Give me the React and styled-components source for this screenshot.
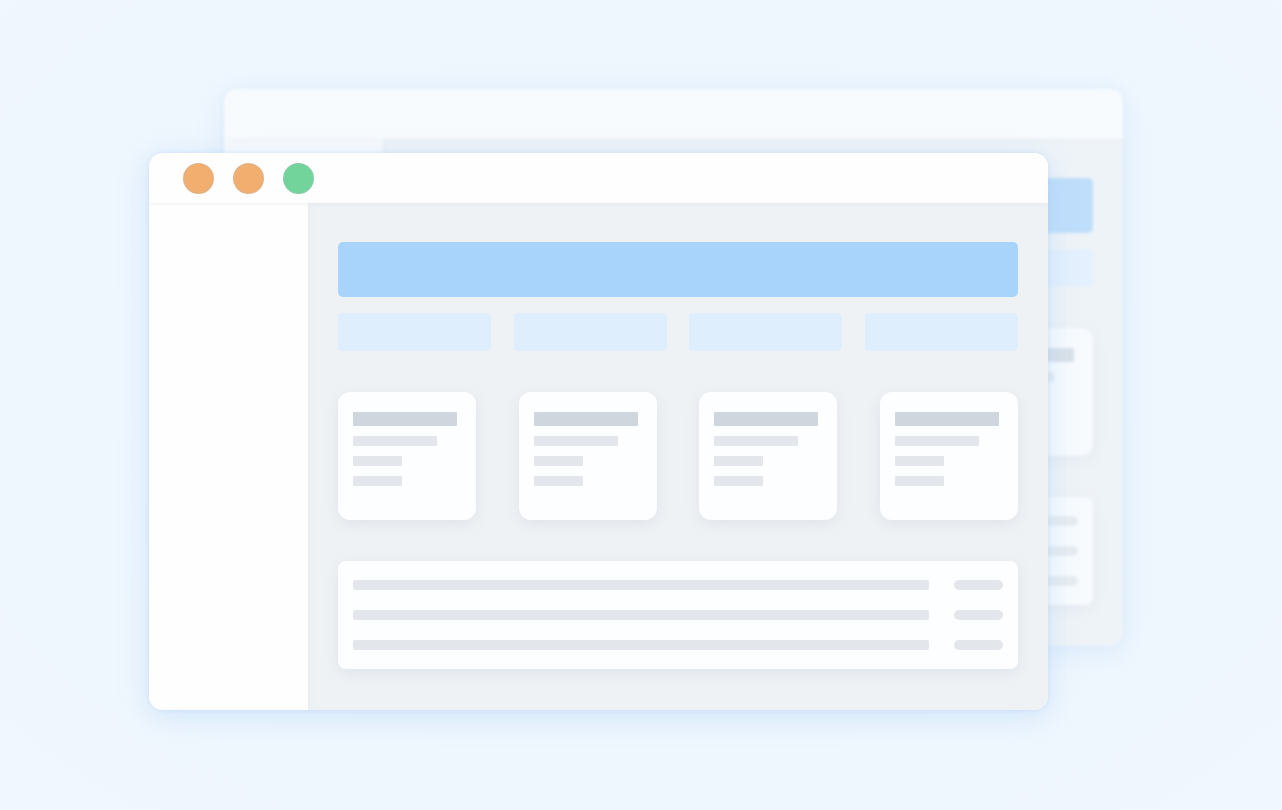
import React from 'react'
import styled, { createGlobalStyle, css } from 'styled-components'

const Global = createGlobalStyle`
    html, body {
        margin: 0;
        padding: 0;
        background: #eef6fe;
        font-family: "Inter", "Liberation Sans", sans-serif;
    }
`

const Page = styled.div`
    width: 1282px;
    height: 810px;
    box-sizing: border-box;
    padding: 153px 0 0 149px;
    overflow: hidden;
    background: radial-gradient(ellipse at 50% 45%, #edf5fd 0%, #eef6fe 60%, #f0f7fe 100%);
`

const Stage = styled.div`
    position: relative;
    width: 899px;
    height: 557px;
`

const Frame = styled.div`
    width: 899px;
    height: 557px;
    border-radius: 14px;
    overflow: hidden;
    display: flex;
    flex-direction: column;
    background: #fefefe;
    box-shadow: 0 6px 28px rgba(150, 195, 240, 0.35), 0 0 4px rgba(180, 210, 240, 0.4);
    ${p => p.$back && css`
        position: absolute;
        left: 75px;
        top: -64px;
        opacity: 0.66;
        filter: blur(1.4px);
    `}
    ${p => !p.$back && css`
        position: relative;
    `}
`

const TitleBar = styled.div`
    height: 50px;
    flex-shrink: 0;
    display: flex;
    align-items: center;
    gap: 19px;
    padding-left: 34px;
    background: #fefefe;
    box-shadow: 0 1px 3px rgba(200, 210, 220, 0.3);
    position: relative;
    z-index: 1;
`

const Dot = styled.span`
    width: 29px;
    height: 29px;
    border-radius: 50%;
    background: ${p => p.$color};
    border: 1px solid rgba(180, 190, 200, 0.35);
`

const Body = styled.div`
    flex: 1;
    display: flex;
`

const Sidebar = styled.div`
    width: 159px;
    flex-shrink: 0;
    background: #fefefe;
    box-shadow: 1px 0 4px rgba(200, 210, 220, 0.25);
    position: relative;
`

const Main = styled.div`
    flex: 1;
    background: #eff2f5;
    padding: 39px 30px 0 30px;
    display: flex;
    flex-direction: column;
`

const Banner = styled.div`
    height: 55px;
    border-radius: 5px;
    background: #a8d3fa;
`

const ChipRow = styled.div`
    margin-top: 16px;
    display: grid;
    grid-template-columns: repeat(4, 153px);
    justify-content: space-between;
`

const Chip = styled.div`
    height: 38px;
    border-radius: 4px;
    background: #dfeefd;
`

const CardRow = styled.div`
    margin-top: 41px;
    display: grid;
    grid-template-columns: repeat(4, 138px);
    justify-content: space-between;
`

const Card = styled.div`
    height: 128px;
    box-sizing: border-box;
    padding: 20px 15px;
    border-radius: 12px;
    background: #fdfeff;
    box-shadow: 0 4px 14px rgba(190, 200, 210, 0.3);
    display: flex;
    flex-direction: column;
    gap: 10px;
`

const Bar = styled.div`
    width: ${p => p.$w}px;
    height: ${p => p.$h || 10}px;
    background: ${p => p.$dark ? '#cfd6de' : '#e3e7eb'};
    border-radius: ${p => p.$round ? '5px' : '1px'};
    flex-shrink: 0;
`

const Table = styled.div`
    margin-top: 41px;
    height: 108px;
    box-sizing: border-box;
    padding: 19px 15px;
    border-radius: 8px;
    background: #fdfeff;
    box-shadow: 0 4px 14px rgba(190, 200, 210, 0.3);
    display: flex;
    flex-direction: column;
    gap: 20px;
`

const TableRow = styled.div`
    display: flex;
    justify-content: space-between;
    align-items: center;
`

const Line = styled.div`
    width: 576px;
    height: 10px;
    border-radius: 2px;
    background: #e3e7eb;
`

function Window({ back }) {
    return (
        <Frame $back={back}>
            <TitleBar>
                {!back && (
                    <>
                        <Dot $color="#f2ae6e" />
                        <Dot $color="#f2ae6e" />
                        <Dot $color="#72d49b" />
                    </>
                )}
            </TitleBar>
            <Body>
                <Sidebar />
                <Main>
                    <Banner />
                    <ChipRow>
                        {[0, 1, 2, 3].map(i => <Chip key={i} />)}
                    </ChipRow>
                    <CardRow>
                        {[0, 1, 2, 3].map(i => (
                            <Card key={i}>
                                <Bar $w={104} $h={14} $dark />
                                <Bar $w={84} />
                                <Bar $w={49} />
                                <Bar $w={49} />
                            </Card>
                        ))}
                    </CardRow>
                    <Table>
                        {[0, 1, 2].map(i => (
                            <TableRow key={i}>
                                <Line />
                                <Bar $w={49} $round />
                            </TableRow>
                        ))}
                    </Table>
                </Main>
            </Body>
        </Frame>
    )
}

export default function App() {
    return (
        <>
            <Global />
            <Page>
                <Stage>
                    <Window back />
                    <Window />
                </Stage>
            </Page>
        </>
    )
}
